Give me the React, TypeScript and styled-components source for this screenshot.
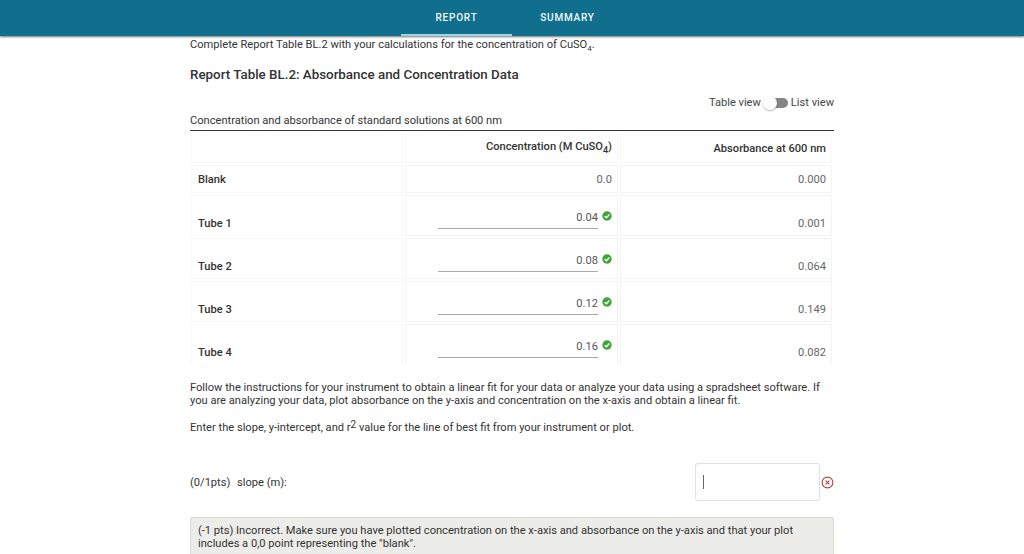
import React from "react";
import styled, { createGlobalStyle } from "styled-components";

const Global = createGlobalStyle`
  html, body { margin: 0; padding: 0; background: #fff; height: 554px; overflow: hidden; }
  body { font-family: Roboto, "Liberation Sans", sans-serif; color: #333; }
  sub, sup { line-height: 0; }
`;

const Page = styled.div`
  height: 554px;
  overflow: hidden;
  display: flex;
  flex-direction: column;
`;
const Header = styled.header`
  height: 36px;
  flex: none;
  background: #0f6f8c;
  box-shadow: 0 1px 2px rgba(0, 0, 0, 0.55);
  display: flex;
  justify-content: center;
  position: relative;
  z-index: 2;
`;
const Tabs = styled.nav`
  display: flex;
  width: 222px;
`;
const Tab = styled.div<{ $active?: boolean }>`
  width: 111px;
  flex: none;
  text-align: center;
  font-size: 10px;
  font-weight: 500;
  letter-spacing: 0.8px;
  line-height: 36px;
  color: #f2f7f9;
  box-sizing: border-box;
  border-bottom: 2px solid ${(p) => (p.$active ? "#9fd3e6" : "transparent")};
  height: 36px;
`;
const Content = styled.main`
  width: 644px;
  margin: 0 auto;
  padding-top: 2px;
  font-size: 11.12px;
  line-height: 13px;
`;
const Intro = styled.p`
  margin: 0;
  height: 13px;
  font-size: 11.12px;
  line-height: 13px;
  sub { font-size: 8px; }
`;
const Title = styled.h3`
  margin: 16px 0 0;
  font-size: 13.36px;
  line-height: 16px;
  font-weight: 500;
  color: #333;
`;
const ToggleRow = styled.div`
  margin-top: 13px;
  height: 13px;
  display: flex;
  justify-content: flex-end;
  align-items: center;
  font-size: 11.12px;
  color: #444;
`;
const ToggleTrack = styled.span`
  position: relative;
  width: 26px;
  height: 12px;
  margin: 0 3px 0 1px;
  flex: none;
`;
const Rail = styled.span`
  position: absolute;
  left: 6px;
  right: 0;
  top: 1px;
  height: 10px;
  border-radius: 5px;
  background: #858585;
`;
const Knob = styled.span`
  position: absolute;
  left: 1px;
  top: -1px;
  width: 14px;
  height: 14px;
  border-radius: 50%;
  background: #fff;
  box-shadow: 0 1px 2px rgba(0, 0, 0, 0.3);
`;
const Caption = styled.div`
  margin-top: 5px;
  padding-bottom: 3px;
  line-height: 13px;
  font-size: 11.12px;
  border-bottom: 1px solid #333;
`;
const TableClip = styled.div`
  height: 233px;
  overflow: hidden;
`;
const Table = styled.div`
  display: grid;
  grid-template-columns: 214px 215px 214px;
  grid-template-rows: 32px 30px 43px 43px 43px 43px;
  padding-top: 2px;
  width: 643px;
`;
const Cell = styled.div<{ $head?: boolean; $right?: boolean; $pad?: number; $lift?: number }>`
  box-sizing: border-box;
  margin: 0 1px 2px 1px;
  border: 1px solid ${(p) => (p.$head ? "#f8f8f8" : "#f3f3f3")};
  padding: ${(p) => p.$pad ?? 0}px 5px ${(p) => p.$lift ?? 0}px 6px;
  font-size: 11.12px;
  font-weight: ${(p) => (p.$head ? 500 : 400)};
  color: ${(p) => (p.$head ? "#333" : "#666")};
  display: flex;
  align-items: center;
  justify-content: ${(p) => (p.$right ? "flex-end" : "flex-start")};
  sub { font-size: 9px; }
`;
const AnswerCell = styled.div`
  box-sizing: border-box;
  margin: 0 1px 2px 1px;
  border: 1px solid #f3f3f3;
  padding: 0 5px 6px 32px;
  display: flex;
  align-items: flex-end;
`;
const Answer = styled.div`
  flex: 1;
  height: 20px;
  box-sizing: border-box;
  border-bottom: 1px solid #aaa;
  display: flex;
  align-items: center;
  justify-content: flex-end;
  font-size: 11.12px;
  color: #555;
  padding-bottom: 3px;
`;
const Check = styled.span`
  flex: none;
  width: 14px;
  height: 20px;
  display: flex;
  justify-content: flex-end;
  padding-top: 2px;
  box-sizing: border-box;
`;
const Para = styled.p`
  margin: 0;
  color: #333;
  font-size: 11.12px;
  line-height: 13px;
  sup { font-size: 10px; vertical-align: 3.5px; }
`;
const Instructions = styled(Para)`
  margin-top: 17px;
  width: 640px;
`;
const EnterLine = styled(Para)`
  margin-top: 14px;
`;
const SlopeRow = styled.div`
  margin-top: 29px;
  height: 38px;
  display: flex;
  align-items: center;
  font-size: 11.12px;
  color: #333;
`;
const Points = styled.span`
  width: 47px;
  flex: none;
`;
const SlopeLabel = styled.span`
  flex: 1;
`;
const InputBox = styled.div`
  width: 125px;
  height: 38px;
  box-sizing: border-box;
  border: 1px solid #e0e0e0;
  border-radius: 3px;
  display: flex;
  align-items: center;
  padding-left: 7px;
  margin-right: 1px;
`;
const Caret = styled.span`
  width: 1px;
  height: 14px;
  background: #667;
`;
const ErrorMark = styled.span`
  width: 13px;
  height: 13px;
  display: flex;
`;
const Feedback = styled.div`
  margin-top: 16px;
  box-sizing: border-box;
  height: 60px;
  border: 1px solid #d9d9d3;
  border-radius: 2px;
  background: #ecece8;
  padding: 6px 7px;
  font-size: 11.12px;
  line-height: 13px;
  color: #333;
`;

const CheckIcon = () => (
  <svg width="10" height="10" viewBox="0 0 10 10" aria-hidden="true">
    <circle cx="5" cy="5" r="4.7" fill="#3fa535" />
    <path d="M2.7 5.2 4.4 6.8 7.4 3.5" fill="none" stroke="#fff" strokeWidth="1.4" />
  </svg>
);

const ErrorIcon = () => (
  <svg width="13" height="13" viewBox="0 0 13 13" aria-hidden="true">
    <circle cx="6.5" cy="6.5" r="5.4" fill="none" stroke="#b5413f" strokeWidth="1.1" />
    <path d="M4.6 4.6 8.4 8.4M8.4 4.6 4.6 8.4" stroke="#b5413f" strokeWidth="1.1" />
  </svg>
);

const rows = [
  { name: "Tube 1", value: "0.04", abs: "0.001" },
  { name: "Tube 2", value: "0.08", abs: "0.064" },
  { name: "Tube 3", value: "0.12", abs: "0.149" },
  { name: "Tube 4", value: "0.16", abs: "0.082" },
];

export default function App() {
  return (
    <Page>
      <Global />
      <Header>
        <Tabs>
          <Tab $active>REPORT</Tab>
          <Tab>SUMMARY</Tab>
        </Tabs>
      </Header>
      <Content>
        <Intro>
          Complete Report Table BL.2 with your calculations for the concentration of CuSO<sub>4</sub>.
        </Intro>
        <Title>Report Table BL.2: Absorbance and Concentration Data</Title>
        <ToggleRow>
          Table view
          <ToggleTrack>
            <Rail />
            <Knob />
          </ToggleTrack>
          List view
        </ToggleRow>
        <Caption>Concentration and absorbance of standard solutions at 600 nm</Caption>
        <TableClip>
          <Table>
            <Cell $head />
            <Cell $head $right $lift={3}>
              <span>
                Concentration (M CuSO<sub>4</sub>)
              </span>
            </Cell>
            <Cell $head $right>
              Absorbance at 600 nm
            </Cell>
            <Cell $head>Blank</Cell>
            <Cell $right>0.0</Cell>
            <Cell $right>0.000</Cell>
            {rows.map((r) => (
              <React.Fragment key={r.name}>
                <Cell $head $pad={16}>
                  {r.name}
                </Cell>
                <AnswerCell>
                  <Answer>{r.value}</Answer>
                  <Check>
                    <CheckIcon />
                  </Check>
                </AnswerCell>
                <Cell $right $pad={15}>
                  {r.abs}
                </Cell>
              </React.Fragment>
            ))}
          </Table>
        </TableClip>
        <Instructions>
          Follow the instructions for your instrument to obtain a linear fit for your data or analyze your data using a
          spradsheet software. If you are analyzing your data, plot absorbance on the y-axis and concentration on the
          x-axis and obtain a linear fit.
        </Instructions>
        <EnterLine>
          Enter the slope, y-intercept, and r<sup>2</sup> value for the line of best fit from your instrument or plot.
        </EnterLine>
        <SlopeRow>
          <Points>(0/1pts)</Points>
          <SlopeLabel>slope (m):</SlopeLabel>
          <InputBox>
            <Caret />
          </InputBox>
          <ErrorMark>
            <ErrorIcon />
          </ErrorMark>
        </SlopeRow>
        <Feedback>
          (-1 pts) Incorrect. Make sure you have plotted concentration on the x-axis and absorbance on the y-axis and
          that your plot includes a 0,0 point representing the "blank".
        </Feedback>
      </Content>
    </Page>
  );
}
